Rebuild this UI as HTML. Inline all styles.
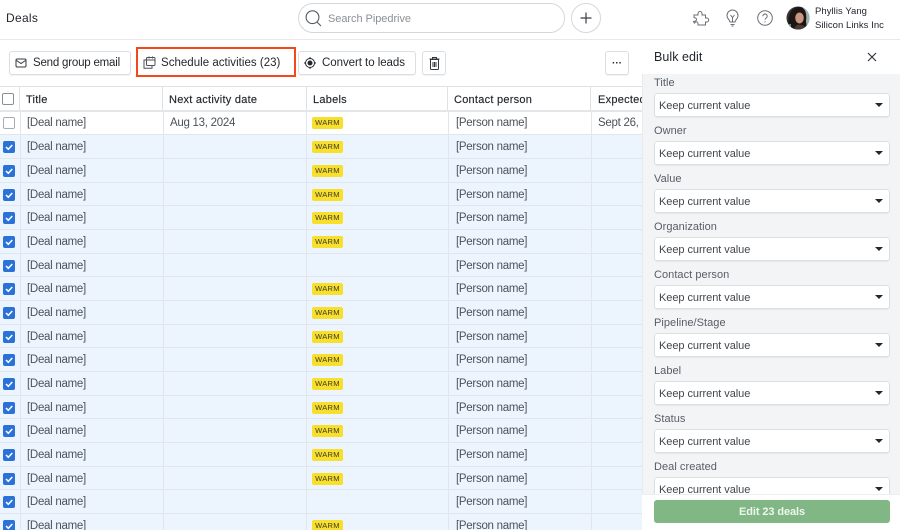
<!DOCTYPE html>
<html style="width:900px;height:530px;overflow:hidden"><head><meta charset="utf-8"><style>
*{box-sizing:border-box}
html,body{margin:0;padding:0}
body{width:900px;height:530px;overflow:hidden;background:#fff}
#p{position:relative;width:900px;height:530px;overflow:hidden;background:#fff;font-family:"Liberation Sans",sans-serif;color:#2a2e36;font-size:11px}
.a{position:absolute;white-space:nowrap}
.btn{position:absolute;top:51px;height:24px;background:#fff;border:1px solid #dcdfe2;border-radius:3px;box-shadow:0 1px 1px rgba(0,0,0,.06);line-height:23px;font-size:11.5px;color:#23272e;white-space:nowrap;letter-spacing:-.05px}
.btn svg{position:absolute}
.th{position:absolute;top:87px;height:24px;line-height:26px;font-size:11px;color:#23272e;letter-spacing:.25px;border-right:1px solid #dfe2e5;white-space:nowrap;overflow:hidden;padding-left:6px;-webkit-text-stroke:.15px #23272e}
.r{position:absolute;left:0;width:642px;height:25px;border-top:1px solid #e0e6ec;background:#ecf4fd;line-height:25px;color:#4c525a;font-size:11.5px;letter-spacing:-.28px}
.r i{position:absolute;top:0;height:24px;width:1px;background:#e0e6ec}
.r span{position:absolute;top:0;white-space:nowrap}
.r b{position:absolute;top:6px;left:312px;width:31px;height:12px;background:#f8df2c;border-radius:2px;font-size:7.5px;line-height:12px;text-align:center;color:#3a3a2a;font-weight:400;letter-spacing:.3px}
.c{position:absolute;left:3px;top:6px;width:12px;height:12px;border-radius:2px;background:#2a72d8}
.c svg{position:absolute;left:0;top:0}
.lb{position:absolute;left:654px;font-size:11px;color:#585d64;letter-spacing:.05px;line-height:16px}
.s{position:absolute;left:654px;width:236px;height:24px;background:#fff;border:1px solid #dcdfe2;border-radius:3px;line-height:24px;padding-left:4px;color:#41464d;font-size:11px;letter-spacing:-.06px;box-shadow:0 1px 1px rgba(0,0,0,.05)}
.s:after{content:"";position:absolute;right:6px;top:9px;border:4px solid transparent;border-top:4px solid #23272e;border-bottom:0}
</style></head><body><div id="p">

<div class="a" style="left:6px;top:11px;font-size:12px;color:#23272e;letter-spacing:.3px;line-height:15px">Deals</div>
<div class="a" style="left:298px;top:3px;width:267px;height:30px;border:1px solid #d4d7da;border-radius:15px;background:#fff"></div>
<svg class="a" style="left:304px;top:9px" width="19" height="19" viewBox="0 0 19 19" fill="none" stroke="#555b62" stroke-width="1.1"><circle cx="8.5" cy="8.2" r="6.4"/><path d="M13 13l4 4"/></svg>
<div class="a" style="left:328px;top:12px;color:#8b9096;font-size:11px;letter-spacing:-.05px;line-height:14px">Search Pipedrive</div>
<div class="a" style="left:571px;top:3px;width:30px;height:30px;border:1px solid #d4d7da;border-radius:50%"></div>
<svg class="a" style="left:579px;top:11px" width="14" height="14" fill="none" stroke="#3a3f46" stroke-width="1.2"><path d="M7 1.5v11M1.5 7h11"/></svg>
<svg class="a" style="left:692px;top:9px" width="18" height="18" viewBox="0 0 18 18" fill="none" stroke="#6a6f76" stroke-width="1"><path d="M2 6h4V4.500a2 2 0 1 1 4 0V6h3.500v3h1.200a2 2 0 1 1 0 4h-1.200v3H6v-1.500a1.700 1.700 0 0 0-3.400 0L1.500 12.500l2-.5a1.600 1.600 0 0 0 0-3L2 8.500z"/></svg>
<svg class="a" style="left:725px;top:9px" width="15" height="18" viewBox="0 0 15 18" fill="none" stroke="#6a6f76" stroke-width="1"><path d="M5 13c0-2-3-3-3-6.500a5.500 5.500 0 0 1 11 0C13 10 10 11 10 13zM5.500 15.500h4M6.500 17h2M5.500 6l2 2.500 2-2.500M7.500 8.500V13"/></svg>
<svg class="a" style="left:757px;top:10px" width="16" height="16" viewBox="0 0 16 16" fill="none" stroke="#6a6f76" stroke-width="1"><circle cx="8" cy="8" r="7.300"/><path d="M5.800 6.200a2.200 2.200 0 1 1 3.400 1.800c-.8.500-1.200 1-1.200 1.800M8 11.200v1.200"/></svg>
<svg class="a" style="left:786px;top:6px" width="24" height="24" viewBox="0 0 24 24"><defs><clipPath id="av"><circle cx="12" cy="12" r="11.500"/></clipPath></defs><g clip-path="url(#av)"><rect width="24" height="24" fill="#3b3330"/><rect x="17" width="7" height="24" fill="#9fb4ae"/><path d="M3 24C1 12 4 1 13 1c7 0 8 8 7 14l1 9z" fill="#1c1614"/><ellipse cx="13.500" cy="12" rx="4.300" ry="5.500" fill="#c99680"/><path d="M8 24c1-5 4-6 7-5 3 0 5 2 5 5z" fill="#4a3a36"/><path d="M0 18h5v6H0z" fill="#5f8a8a"/></g></svg>
<div class="a" style="left:815px;top:5px;font-size:9.500px;line-height:13.500px;color:#23272e;letter-spacing:.05px">Phyllis Yang<br>Silicon Links Inc</div>
<div class="a" style="left:0;top:39px;width:900px;height:1px;background:#e6e8ea"></div>

<div class="btn" style="left:9px;width:122px;padding-left:23px;letter-spacing:-.2px"><svg style="left:5px;top:5px" width="12" height="12" viewBox="0 0 12 12" fill="none" stroke="#33383f" stroke-width="1"><rect x="1" y="2" width="10" height="8" rx="1.200"/><path d="M1.500 3.500L6 6.500l4.500-3"/></svg>Send group email</div>
<div class="a" style="left:136px;top:47px;width:160px;height:30px;border:2.500px solid #f4471e"></div>
<div class="a" style="left:161px;top:56px;font-size:11.500px;line-height:15px;color:#23272e;letter-spacing:.02px">Schedule activities (23)</div>
<svg class="a" style="left:143px;top:56px" width="13" height="13" viewBox="0 0 13 13" fill="none" stroke="#4b5057" stroke-width="1"><rect x="3.500" y="1.500" width="8.500" height="8" rx="1"/><path d="M3.500 4h8.500M6 .5v2M9.500.5v2"/><path d="M3 4H1v8.200h8V10"/></svg>
<div class="btn" style="left:298px;width:118px;padding-left:23px"><svg style="left:5px;top:5px" width="12" height="12" viewBox="0 0 12 12" fill="none" stroke="#23272e" stroke-width="1"><circle cx="6" cy="6" r="4.500"/><circle cx="6" cy="6" r="2" fill="#23272e"/><path d="M6 0v1.500M6 10.500V12M0 6h1.500M10.500 6H12"/></svg>Convert to leads</div>
<div class="btn" style="left:422px;width:24px"><svg style="left:5px;top:4px" width="13" height="14" viewBox="0 0 13 14" fill="none" stroke="#33383f" stroke-width="1"><path d="M2.500 3.500h8v9a1 1 0 0 1-1 1h-6a1 1 0 0 1-1-1zM1.500 3h10M4.500 3V1.500h4V3M5 6v5M6.500 6v5M8 6v5"/></svg></div>
<div class="btn" style="left:605px;width:24px;line-height:24px;text-align:center;font-weight:700;letter-spacing:0;font-size:10px">···</div>

<div class="a" style="left:0;top:86px;width:642px;height:1px;background:#dfe2e5"></div>
<div class="a" style="left:2px;top:93px;width:12px;height:12px;border:1px solid #8a8f95;border-radius:2px;background:#fff"></div>
<div class="th" style="left:0;width:20px;padding:0;height:24px;background:none"></div>
<div class="th" style="left:20px;width:143px">Title</div>
<div class="th" style="left:163px;width:144px">Next activity date</div>
<div class="th" style="left:307px;width:141px">Labels</div>
<div class="th" style="left:448px;width:143px">Contact person</div>
<div class="th" style="left:591px;width:51px;border:0;padding-left:7px">Expected close date</div>

<div class="r" style="top:110px;background:#fff;border-top:2px solid #e3e5e8"><i style="left:20px"></i><i style="left:163px"></i><i style="left:306px"></i><i style="left:448px"></i><i style="left:591px"></i><div class="c" style="top:5px;background:#fff;border:1px solid #a9adb2"></div><span style="left:27px;top:-1px">[Deal name]</span><span style="left:170px;top:-1px">Aug 13, 2024</span><b style="top:5px">WARM</b><span style="left:456px;top:-1px">[Person name]</span><span style="left:598px;top:-1px">Sept 26, 2024</span></div>
<div class="r" style="top:134px"><i style="left:20px"></i><i style="left:163px"></i><i style="left:306px"></i><i style="left:448px"></i><i style="left:591px"></i><div class="c"><svg width="12" height="12" fill="none" stroke="#fff" stroke-width="1.500"><path d="M3 6l2.300 2.300L9.300 4"/></svg></div><span style="left:27px">[Deal name]</span><b>WARM</b><span style="left:456px">[Person name]</span></div>
<div class="r" style="top:158px"><i style="left:20px"></i><i style="left:163px"></i><i style="left:306px"></i><i style="left:448px"></i><i style="left:591px"></i><div class="c"><svg width="12" height="12" fill="none" stroke="#fff" stroke-width="1.500"><path d="M3 6l2.300 2.300L9.300 4"/></svg></div><span style="left:27px">[Deal name]</span><b>WARM</b><span style="left:456px">[Person name]</span></div>
<div class="r" style="top:182px"><i style="left:20px"></i><i style="left:163px"></i><i style="left:306px"></i><i style="left:448px"></i><i style="left:591px"></i><div class="c"><svg width="12" height="12" fill="none" stroke="#fff" stroke-width="1.500"><path d="M3 6l2.300 2.300L9.300 4"/></svg></div><span style="left:27px">[Deal name]</span><b>WARM</b><span style="left:456px">[Person name]</span></div>
<div class="r" style="top:205px"><i style="left:20px"></i><i style="left:163px"></i><i style="left:306px"></i><i style="left:448px"></i><i style="left:591px"></i><div class="c"><svg width="12" height="12" fill="none" stroke="#fff" stroke-width="1.500"><path d="M3 6l2.300 2.300L9.300 4"/></svg></div><span style="left:27px">[Deal name]</span><b>WARM</b><span style="left:456px">[Person name]</span></div>
<div class="r" style="top:229px"><i style="left:20px"></i><i style="left:163px"></i><i style="left:306px"></i><i style="left:448px"></i><i style="left:591px"></i><div class="c"><svg width="12" height="12" fill="none" stroke="#fff" stroke-width="1.500"><path d="M3 6l2.300 2.300L9.300 4"/></svg></div><span style="left:27px">[Deal name]</span><b>WARM</b><span style="left:456px">[Person name]</span></div>
<div class="r" style="top:253px"><i style="left:20px"></i><i style="left:163px"></i><i style="left:306px"></i><i style="left:448px"></i><i style="left:591px"></i><div class="c"><svg width="12" height="12" fill="none" stroke="#fff" stroke-width="1.500"><path d="M3 6l2.300 2.300L9.300 4"/></svg></div><span style="left:27px">[Deal name]</span><span style="left:456px">[Person name]</span></div>
<div class="r" style="top:276px"><i style="left:20px"></i><i style="left:163px"></i><i style="left:306px"></i><i style="left:448px"></i><i style="left:591px"></i><div class="c"><svg width="12" height="12" fill="none" stroke="#fff" stroke-width="1.500"><path d="M3 6l2.300 2.300L9.300 4"/></svg></div><span style="left:27px">[Deal name]</span><b>WARM</b><span style="left:456px">[Person name]</span></div>
<div class="r" style="top:300px"><i style="left:20px"></i><i style="left:163px"></i><i style="left:306px"></i><i style="left:448px"></i><i style="left:591px"></i><div class="c"><svg width="12" height="12" fill="none" stroke="#fff" stroke-width="1.500"><path d="M3 6l2.300 2.300L9.300 4"/></svg></div><span style="left:27px">[Deal name]</span><b>WARM</b><span style="left:456px">[Person name]</span></div>
<div class="r" style="top:324px"><i style="left:20px"></i><i style="left:163px"></i><i style="left:306px"></i><i style="left:448px"></i><i style="left:591px"></i><div class="c"><svg width="12" height="12" fill="none" stroke="#fff" stroke-width="1.500"><path d="M3 6l2.300 2.300L9.300 4"/></svg></div><span style="left:27px">[Deal name]</span><b>WARM</b><span style="left:456px">[Person name]</span></div>
<div class="r" style="top:347px"><i style="left:20px"></i><i style="left:163px"></i><i style="left:306px"></i><i style="left:448px"></i><i style="left:591px"></i><div class="c"><svg width="12" height="12" fill="none" stroke="#fff" stroke-width="1.500"><path d="M3 6l2.300 2.300L9.300 4"/></svg></div><span style="left:27px">[Deal name]</span><b>WARM</b><span style="left:456px">[Person name]</span></div>
<div class="r" style="top:371px"><i style="left:20px"></i><i style="left:163px"></i><i style="left:306px"></i><i style="left:448px"></i><i style="left:591px"></i><div class="c"><svg width="12" height="12" fill="none" stroke="#fff" stroke-width="1.500"><path d="M3 6l2.300 2.300L9.300 4"/></svg></div><span style="left:27px">[Deal name]</span><b>WARM</b><span style="left:456px">[Person name]</span></div>
<div class="r" style="top:395px"><i style="left:20px"></i><i style="left:163px"></i><i style="left:306px"></i><i style="left:448px"></i><i style="left:591px"></i><div class="c"><svg width="12" height="12" fill="none" stroke="#fff" stroke-width="1.500"><path d="M3 6l2.300 2.300L9.300 4"/></svg></div><span style="left:27px">[Deal name]</span><b>WARM</b><span style="left:456px">[Person name]</span></div>
<div class="r" style="top:418px"><i style="left:20px"></i><i style="left:163px"></i><i style="left:306px"></i><i style="left:448px"></i><i style="left:591px"></i><div class="c"><svg width="12" height="12" fill="none" stroke="#fff" stroke-width="1.500"><path d="M3 6l2.300 2.300L9.300 4"/></svg></div><span style="left:27px">[Deal name]</span><b>WARM</b><span style="left:456px">[Person name]</span></div>
<div class="r" style="top:442px"><i style="left:20px"></i><i style="left:163px"></i><i style="left:306px"></i><i style="left:448px"></i><i style="left:591px"></i><div class="c"><svg width="12" height="12" fill="none" stroke="#fff" stroke-width="1.500"><path d="M3 6l2.300 2.300L9.300 4"/></svg></div><span style="left:27px">[Deal name]</span><b>WARM</b><span style="left:456px">[Person name]</span></div>
<div class="r" style="top:466px"><i style="left:20px"></i><i style="left:163px"></i><i style="left:306px"></i><i style="left:448px"></i><i style="left:591px"></i><div class="c"><svg width="12" height="12" fill="none" stroke="#fff" stroke-width="1.500"><path d="M3 6l2.300 2.300L9.300 4"/></svg></div><span style="left:27px">[Deal name]</span><b>WARM</b><span style="left:456px">[Person name]</span></div>
<div class="r" style="top:489px"><i style="left:20px"></i><i style="left:163px"></i><i style="left:306px"></i><i style="left:448px"></i><i style="left:591px"></i><div class="c"><svg width="12" height="12" fill="none" stroke="#fff" stroke-width="1.500"><path d="M3 6l2.300 2.300L9.300 4"/></svg></div><span style="left:27px">[Deal name]</span><span style="left:456px">[Person name]</span></div>
<div class="r" style="top:513px"><i style="left:20px"></i><i style="left:163px"></i><i style="left:306px"></i><i style="left:448px"></i><i style="left:591px"></i><div class="c"><svg width="12" height="12" fill="none" stroke="#fff" stroke-width="1.500"><path d="M3 6l2.300 2.300L9.300 4"/></svg></div><span style="left:27px">[Deal name]</span><b>WARM</b><span style="left:456px">[Person name]</span></div>

<div class="a" style="left:642px;top:40px;width:258px;height:490px;background:#f3f4f5;border-left:1px solid #e8eaec"></div>
<div class="a" style="left:642px;top:40px;width:258px;height:34px;background:#fff"></div>
<div class="a" style="left:654px;top:49px;font-size:12.500px;line-height:16px;color:#23272e;letter-spacing:.05px">Bulk edit</div>
<svg class="a" style="left:866px;top:51px" width="12" height="12" fill="none" stroke="#2a2e36" stroke-width="1.100"><path d="M2 2l8 8M10 2l-8 8"/></svg>

<div class="lb" style="top:75px">Title</div><div class="s" style="top:93px">Keep current value</div>
<div class="lb" style="top:123px">Owner</div><div class="s" style="top:141px">Keep current value</div>
<div class="lb" style="top:171px">Value</div><div class="s" style="top:189px">Keep current value</div>
<div class="lb" style="top:219px">Organization</div><div class="s" style="top:237px">Keep current value</div>
<div class="lb" style="top:267px">Contact person</div><div class="s" style="top:285px">Keep current value</div>
<div class="lb" style="top:315px">Pipeline/Stage</div><div class="s" style="top:333px">Keep current value</div>
<div class="lb" style="top:363px">Label</div><div class="s" style="top:381px">Keep current value</div>
<div class="lb" style="top:411px">Status</div><div class="s" style="top:429px">Keep current value</div>
<div class="lb" style="top:459px">Deal created</div><div class="s" style="top:477px">Keep current value</div>

<div class="a" style="left:642px;top:494px;width:258px;height:36px;background:#fff;border-top:1px solid #eceef0"></div>
<div class="a" style="left:654px;top:500px;width:236px;height:23px;background:#80b785;border-radius:3px;color:#eef6ee;text-align:center;font-size:11px;font-weight:700;line-height:24px;letter-spacing:-.1px">Edit 23 deals</div>
</div></body></html>
